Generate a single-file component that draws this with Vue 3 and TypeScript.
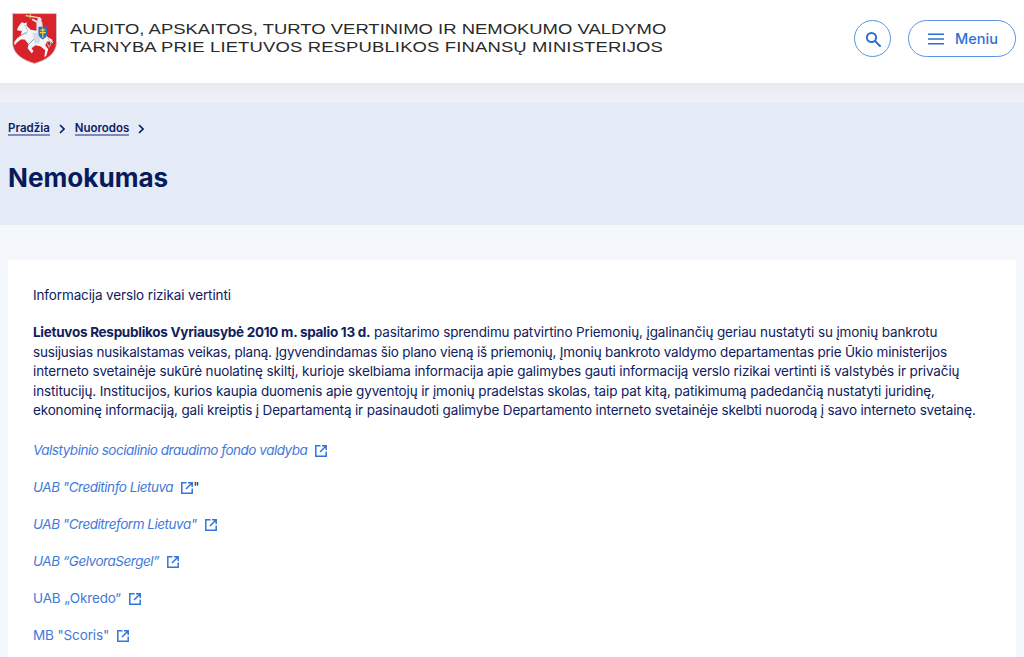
<script setup lang="ts">
interface LinkItem {
  label: string
  italic: boolean
  after?: string
}

const links: LinkItem[] = [
  { label: 'Valstybinio socialinio draudimo fondo valdyba', italic: true },
  { label: 'UAB "Creditinfo Lietuva', italic: true, after: '"' },
  { label: 'UAB "Creditreform Lietuva"', italic: true },
  { label: 'UAB “GelvoraSergel”', italic: true },
  { label: 'UAB „Okredo“', italic: false },
  { label: 'MB "Scoris"', italic: false },
]
</script>

<template>
  <div class="page">
    <header class="site-header">
      <a class="brand">
        <svg class="arms" viewBox="0 0 46 52" aria-hidden="true">
          <path d="M0.5 0.5H45.5V30C45.5 42 34 48.5 23 51.5C12 48.5 0.5 42 0.5 30Z" fill="#d9232b" stroke="#cfcfcf" stroke-width="0.8" />
          <!-- sword -->
          <path d="M14 2.6L29 5" stroke="#f3e6b0" stroke-width="1.3" />
          <path d="M19 1.2L18.4 5.6" stroke="#e9c94a" stroke-width="1.2" />
          <!-- horse -->
          <path d="M7 13L10 9.5L13 10.5L15 9.5L15 13L19 17L28 18.5L34 22L37 25L41 27L42 31L39 29L36 29L34 33L37 37L35 44L33 45L34 38L29 34L24 33L20 36L22 39L20 41L16 36L17 32L13 27L9 27L5 30L3 33L2 30L5 26L9 23L10 18L7 18L5 17Z" fill="#f4f5f7" />
          <path d="M13 12L16 18L14 22M36 25L40 31L38 35L36 31" fill="none" stroke="#b9c2cf" stroke-width="1" />
          <path d="M16 33L26 23M9 23L14 20" stroke="#7c8aa0" stroke-width="0.9" />
          <!-- saddle cloth -->
          <path d="M21 20L30 21L28 31L23 31Z" fill="#d5dce8" />
          <!-- knight -->
          <path d="M25 10L26 7.4A2.2 2.2 0 1 1 30 8L31 10L32 19L29 24L25 20Z" fill="#e4e7ec" />
          <path d="M26 10.5L20 7L21 5.5L27 8.5Z" fill="#dfe3ea" />
          <!-- shield -->
          <path d="M27 14H36V21C36 24 33.5 26 31.5 27C29.5 26 27 24 27 21Z" fill="#2f6fb7" />
          <path d="M31.5 15V25.5M29 17.4H34M28.5 20H34.5" stroke="#f4d63c" stroke-width="1.1" />
        </svg>
        <span class="brand-name">AUDITO, APSKAITOS, TURTO VERTINIMO IR NEMOKUMO VALDYMO<br /><span class="brand-second">TARNYBA PRIE LIETUVOS RESPUBLIKOS FINANSŲ MINISTERIJOS</span></span>
      </a>
      <div class="header-actions">
        <button class="search-btn" aria-label="Paieška">
          <svg viewBox="0 0 16 16" width="16" height="16" fill="none" stroke="#2d6fd8" stroke-width="2">
            <circle cx="6.5" cy="6.5" r="4.6" />
            <path d="M10 10L15 15" stroke-linecap="round" />
          </svg>
        </button>
        <button class="menu-btn">
          <svg viewBox="0 0 16 12" width="16" height="12" fill="none" stroke="#2d6fd8" stroke-width="1.6">
            <path d="M0 1.2H16M0 6H16M0 10.8H16" />
          </svg>
          <span>Meniu</span>
        </button>
      </div>
    </header>
    <div class="header-band"></div>

    <div class="hero">
      <nav class="crumbs">
        <a>Pradžia</a>
        <svg viewBox="0 0 6 10" width="6" height="10" fill="none" stroke="#0b1f5c" stroke-width="1.6"><path d="M1 1L5 5L1 9" /></svg>
        <a>Nuorodos</a>
        <svg viewBox="0 0 6 10" width="6" height="10" fill="none" stroke="#0b1f5c" stroke-width="1.6"><path d="M1 1L5 5L1 9" /></svg>
      </nav>
      <h1>Nemokumas</h1>
    </div>

    <main class="card">
      <p>Informacija verslo rizikai vertinti</p>
      <p class="lead">
        <strong>Lietuvos Respublikos Vyriausybė 2010 m. spalio 13 d.</strong> pasitarimo sprendimu patvirtino Priemonių, įgalinančių geriau nustatyti su įmonių bankrotu<br />
        <span class="tight">susijusias nusikalstamas veikas, planą. Įgyvendindamas šio plano vieną iš priemonių, Įmonių bankroto valdymo departamentas prie Ūkio ministerijos</span><br />
        interneto svetainėje sukūrė nuolatinę skiltį, kurioje skelbiama informacija apie galimybes gauti informaciją verslo rizikai vertinti iš valstybės ir privačių<br />
        institucijų. Institucijos, kurios kaupia duomenis apie gyventojų ir įmonių pradelstas skolas, taip pat kitą, patikimumą padedančią nustatyti juridinę,<br />
        <span class="snug">ekonominę informaciją, gali kreiptis į Departamentą ir pasinaudoti galimybe Departamento interneto svetainėje skelbti nuorodą į savo interneto svetainę.</span>
      </p>
      <p v-for="link in links" :key="link.label">
        <a class="ext" :class="{ italic: link.italic }">{{ link.label }}<svg class="ext-icon" viewBox="0 0 12 12" width="12" height="12" fill="none" stroke="#3274dc" stroke-width="1.5"><path d="M5.5 .8H.8V11.2H11.2V6.5M7 .8H11.2V5M11 1L5 7" /></svg></a><span v-if="link.after" class="after">{{ link.after }}</span>
      </p>
    </main>
  </div>
</template>

<style>
html, body {
  margin: 0;
  background: #f3f6fa;
}
</style>

<style scoped>
.page {
  font-family: Inter, "Liberation Sans", sans-serif;
  color: #0f2160;
  height: 657px;
  overflow: hidden;
}

.site-header {
  height: 83px;
  background: #fff;
  display: flex;
  align-items: center;
  justify-content: space-between;
  padding: 0 8px 6px 12px;
  box-sizing: border-box;
}

.header-band {
  height: 19px;
  background: linear-gradient(#e7eaef, #eef1f5);
}

.brand {
  display: flex;
  align-items: center;
  gap: 13px;
}

.arms {
  width: 45px;
  height: 51px;
  flex: none;
}

.brand-name {
  font-family: "Liberation Sans", sans-serif;
  font-size: 15px;
  line-height: 18.5px;
  color: #2a2a2a;
  white-space: nowrap;
  transform: scaleX(1.23);
  transform-origin: left center;
  margin-top: -1px;
}

.brand-second {
  letter-spacing: 0.12px;
}

.header-actions {
  display: flex;
  align-items: center;
  gap: 17px;
}

.search-btn,
.menu-btn {
  height: 37px;
  background: #fff;
  border: 1px solid #5a93e6;
  border-radius: 19px;
  color: #2d6fd8;
  display: flex;
  align-items: center;
  justify-content: center;
  padding: 0;
  font: inherit;
}

.search-btn {
  width: 37px;
}

.menu-btn {
  width: 108px;
  gap: 11px;
  padding-left: 2px;
  font-size: 14.5px;
  font-weight: 500;
}

.hero {
  background: #e4ebf7;
  height: 123px;
  padding: 20px 8px 0;
  box-sizing: border-box;
}

.crumbs {
  display: flex;
  align-items: center;
  gap: 9px;
  font-size: 11.5px;
  font-weight: 600;
  height: 14px;
}

.crumbs svg {
  margin-right: 1px;
}

.crumbs a {
  border-bottom: 2px solid #8089bd;
  line-height: 12px;
}

.hero h1 {
  margin: 26px 0 0;
  font-size: 26.1px;
  line-height: 32px;
  font-weight: 700;
  color: #071a5a;
}

.card {
  margin: 35px 8px 0;
  background: #fff;
  padding: 26px 25px 0;
  font-size: 13.5px;
  line-height: 19.6px;
  letter-spacing: -0.13px;
  height: 400px;
  box-sizing: border-box;
}

.card p {
  margin: 0 0 17.4px;
  white-space: nowrap;
}

.card p.lead {
  margin-bottom: 20px;
}

.tight {
  letter-spacing: -0.2px;
}

.snug {
  letter-spacing: -0.155px;
}

.card strong {
  font-weight: 700;
  letter-spacing: -0.27px;
}

.ext {
  color: #3f7ad9;
}

.ext.italic {
  font-style: italic;
  letter-spacing: -0.47px;
}

.ext-icon {
  margin-left: 8px;
  vertical-align: -2px;
}

.after {
  color: #0f2160;
}
</style>
